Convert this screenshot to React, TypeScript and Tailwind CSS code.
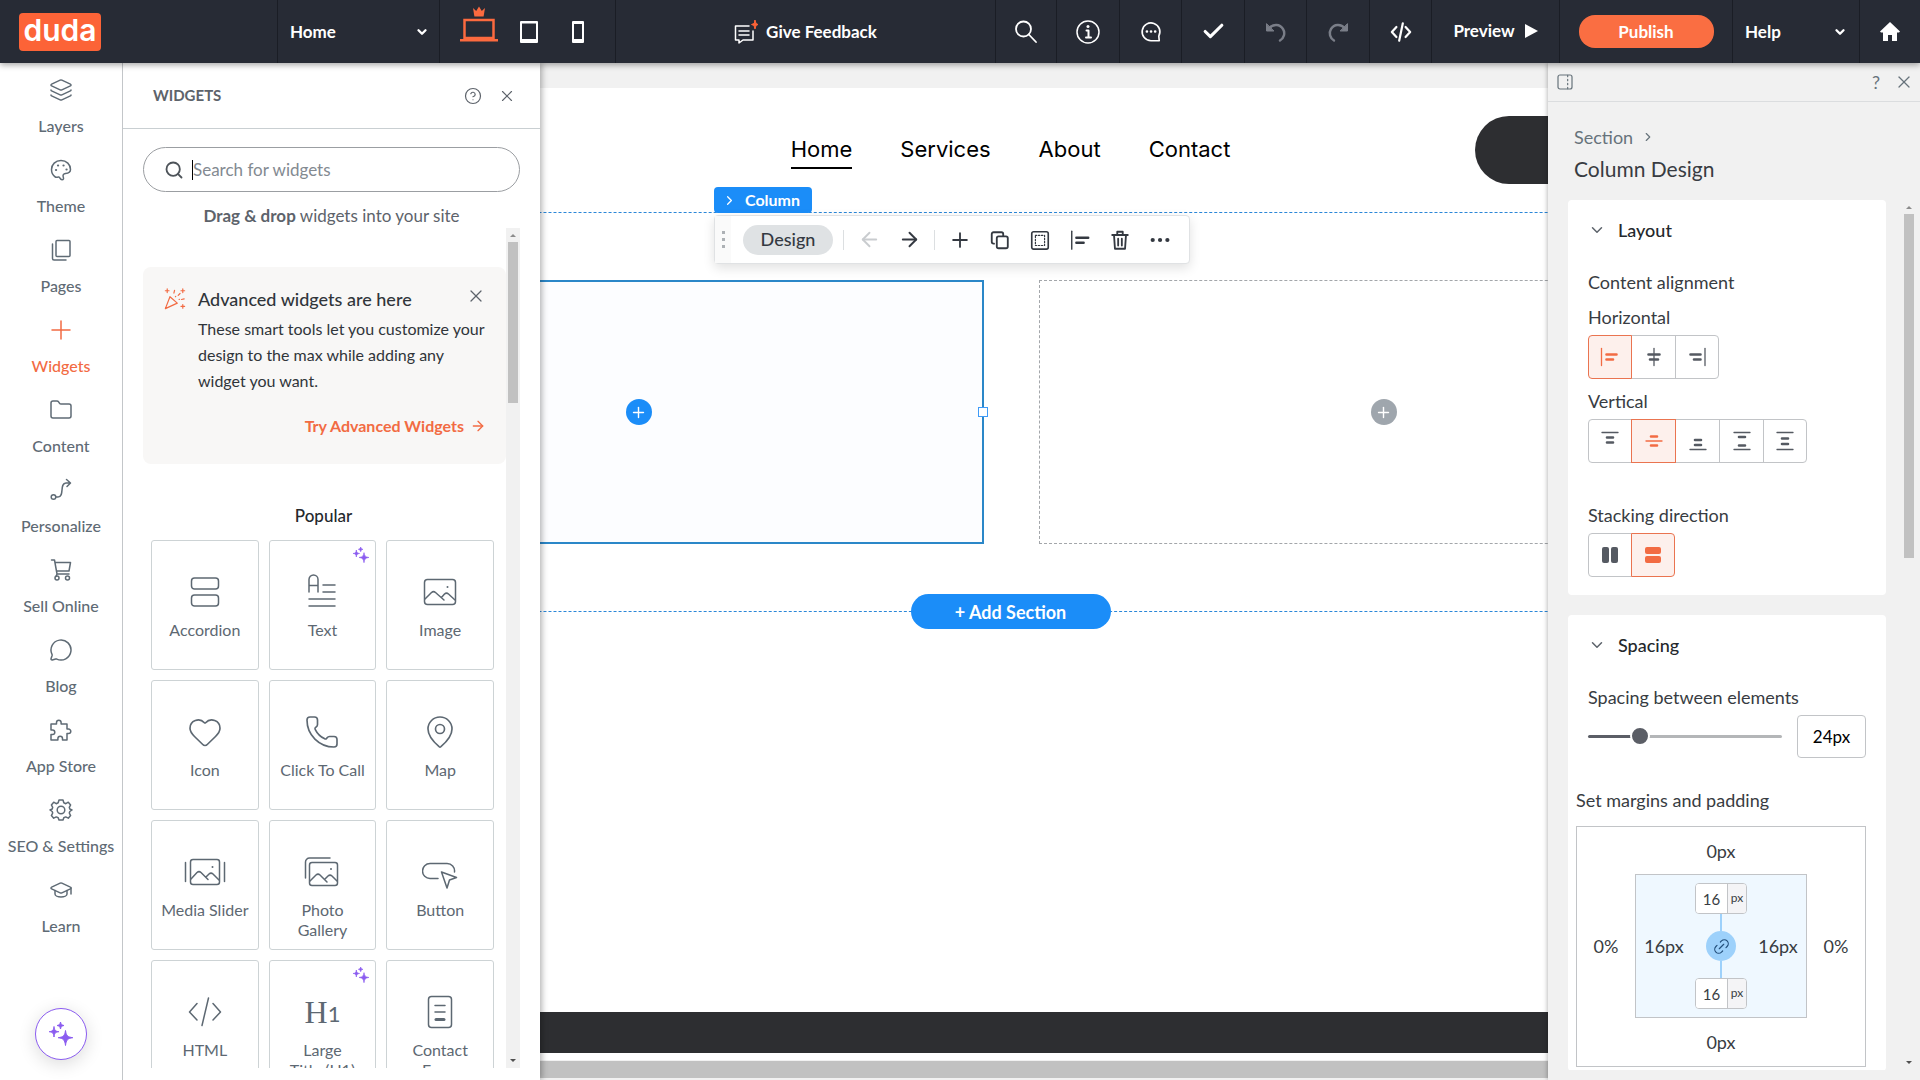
import type { ReactNode } from "react";
import {
  ArrowLeft, ArrowRight, Check, ChevronDown, ChevronRight, CircleHelp,
  Folder, GraduationCap, Heart, Layers, Link2, MapPin, MessageCircle, Phone, Plus, Search, X,
} from "lucide-react";

type IconProps = { children: ReactNode; className?: string; box?: string; width?: number };

function Svg({ children, className = "size-6", box = "0 0 24 24", width = 1.5 }: IconProps) {
  return (
    <svg
      viewBox={box}
      className={className}
      fill="none"
      stroke="currentColor"
      strokeWidth={width}
      strokeLinecap="round"
      strokeLinejoin="round"
      aria-hidden="true"
    >
      {children}
    </svg>
  );
}

function Sparkles({ className }: { className: string }) {
  return (
    <svg viewBox="0 0 24 24" className={className} fill="#8b5cf0" aria-hidden="true">
      <path d="M16.5 8.5C17.2 13.500 18.500 15 23.800 15.700C18.500 16.400 17.200 18 16.500 23.500C15.800 18 14.500 16.400 9.200 15.700C14.500 15 15.800 13.500 16.500 8.500Z" stroke="#8b5cf0" />
      <path d="M5 4.500C5.500 8.300 6.200 9.200 9.800 9.700C6.200 10.200 5.500 11.100 5 15C4.500 11.100 3.800 10.200.2 9.700C3.800 9.200 4.500 8.300 5 4.500Z" stroke="#8b5cf0" />
      <path d="M11.500 0C11.900 2.200 12.700 3 14.900 3.500C12.700 4 11.900 4.800 11.500 7C11.100 4.800 10.300 4 8.100 3.500C10.300 3 11.100 2.200 11.500 0Z" stroke="#8b5cf0" />
    </svg>
  );
}

const paletteIcon = (
  <Svg>
    <path d="M12 2.500C6.500 2.500 2.500 6.500 2.500 11.500c0 3.500 1.500 6 3.800 7.500 1.200.8 2.200-.2 3.500 0 1.400.2 1 2.700 3.200 2.700 1.600 0 1.800-1.200 1.300-2.400-.8-2 .2-3.600 2.200-3.800 2.700-.2 5-.8 5-4C21.500 6.500 17.500 2.500 12 2.500z" />
    <path d="M7 12h.1M9 7.500h.1M14.500 7.500h.1M17.500 11.500h.1" strokeWidth="2.200" />
  </Svg>
);

const pagesIcon = (
  <Svg>
    <rect x="7" y="2.500" width="14" height="16" rx="1" />
    <path d="M3.500 6v14.500a1.500 1.500 0 0 0 1.500 1.500H17" />
  </Svg>
);

const personalizeIcon = (
  <Svg>
    <circle cx="4.500" cy="19" r="2.300" />
    <path d="M7 19h2c7 0 1-14 8-14h4M17.500 1.500 21.500 5l-3.500 3.500" />
  </Svg>
);

const cartIcon = (
  <Svg>
    <path d="M2.500 2h3l2.500 14h12M6.200 4.500h15.300l-1.500 8.500H7.500M8 16l-1 2.500" />
    <circle cx="8" cy="20" r="2" />
    <circle cx="18.500" cy="20" r="2" />
  </Svg>
);

const puzzleIcon = (
  <Svg>
    <path d="M2 6h5.500V4.500a2.300 2.300 0 0 1 4.600 0V6H18v5h1.500a2.300 2.300 0 0 1 0 4.600H18V22h-4.500v-1.500a2.300 2.300 0 0 0-4.600 0V22H2v-5.500h1.500a2.300 2.300 0 0 0 0-4.600H2z" />
  </Svg>
);

const gearIcon = (
  <Svg>
    <circle cx="12" cy="12" r="3.800" />
    <path d="M10 2h4l.8 2.800 2 .9 2.500-1.500 2.300 2.700-1.300 2.500.5 1.600L23 12l-2.200 1.500-.5 1.500 1.300 2.600-2.300 2.600-2.600-1.300-1.900.8L14 22h-4l-.8-2.300-1.900-.8-2.600 1.300-2.300-2.600L3.700 15l-.5-1.500L1 12l2.200-1 .5-1.600-1.300-2.500 2.300-2.700 2.500 1.500 2-.9z" />
  </Svg>
);

const sideItems = [
  { label: "Layers", icon: <Layers size={24} strokeWidth={1.5} /> },
  { label: "Theme", icon: paletteIcon },
  { label: "Pages", icon: pagesIcon },
  { label: "Widgets", icon: <Svg><path d="M12 3v18M3 12h18" /></Svg>, active: true },
  { label: "Content", icon: <Folder size={24} strokeWidth={1.5} /> },
  { label: "Personalize", icon: personalizeIcon },
  { label: "Sell Online", icon: cartIcon },
  { label: "Blog", icon: <MessageCircle size={24} strokeWidth={1.5} /> },
  { label: "App Store", icon: puzzleIcon },
  { label: "SEO & Settings", icon: gearIcon },
  { label: "Learn", icon: <GraduationCap size={24} strokeWidth={1.5} /> },
];

const widgets = [
  {
    label: "Accordion",
    icon: (
      <Svg box="0 0 36 36" className="size-9">
        <rect x="4.500" y="4" width="27" height="11" rx="3" />
        <rect x="4.500" y="21" width="27" height="11" rx="3" />
      </Svg>
    ),
  },
  {
    label: "Text",
    ai: true,
    icon: (
      <Svg box="0 0 36 36" className="size-9">
        <path d="M5 18V5.500a4.500 4.500 0 0 1 9 0V18M5 11.500h9M19 11h12M19 18h12M5 25h26M5 32h26" />
      </Svg>
    ),
  },
  {
    label: "Image",
    icon: (
      <Svg box="0 0 36 36" className="size-9">
        <rect x="2.500" y="5.500" width="31" height="25" rx="3" />
        <path d="M3 25l6.500-6.500a3 3 0 0 1 4 0L22 26M19.500 23.500l3-3.500a3 3 0 0 1 4 0L33 26" />
        <circle cx="25.500" cy="13" r="1" fill="currentColor" stroke="none" />
      </Svg>
    ),
  },
  { label: "Icon", icon: <Heart size={36} strokeWidth={1.1} /> },
  { label: "Click To Call", icon: <Phone size={36} strokeWidth={1.1} /> },
  { label: "Map", icon: <MapPin size={36} strokeWidth={1.1} /> },
  {
    label: "Media Slider",
    icon: (
      <Svg box="0 0 42 36" className="h-9 w-[42px]">
        <rect x="6.500" y="5.500" width="29" height="25" rx="2.500" />
        <path d="M7 25l6-6.500a3 3 0 0 1 4 0l7 7M22 23l3-3a3 3 0 0 1 4 0l6 6M1.500 8.500v19M40.500 8.500v19" />
        <circle cx="28.500" cy="13" r="1" fill="currentColor" stroke="none" />
      </Svg>
    ),
  },
  {
    label: "Photo Gallery",
    wrap: true,
    icon: (
      <Svg box="0 0 36 36" className="size-9">
        <rect x="5.500" y="8.500" width="28" height="23" rx="2.500" />
        <path d="M6 27l6-6a3 3 0 0 1 4 0l7 7M21 25l3-3a3 3 0 0 1 4 0l5 5M1.500 24V8a4 4 0 0 1 4-4H26" />
        <circle cx="27" cy="15" r="1" fill="currentColor" stroke="none" />
      </Svg>
    ),
  },
  {
    label: "Button",
    icon: (
      <Svg box="0 0 36 36" className="size-9">
        <path d="M16 24.500H8a7.500 7.500 0 0 1 0-15h17a7.500 7.500 0 0 1 7.500 8.500" />
        <path d="M19.500 18l15 5.500-7 2.500-2.500 8z" />
      </Svg>
    ),
  },
  {
    label: "HTML",
    icon: (
      <Svg box="0 0 36 36" className="size-9">
        <path d="M10 9.500 2.500 18l7.500 8M26 9.500l7.500 8.500-7.500 8M21.500 4l-6.500 27.500" />
      </Svg>
    ),
  },
  {
    label: "Large Title (H1)",
    ai: true,
    wrap: true,
    icon: (
      <span className="flex h-9 items-center font-[Liberation_Serif] text-[32px] leading-9">
        H<span className="pt-1 font-[Lato] text-[22px]">1</span>
      </span>
    ),
  },
  {
    label: "Contact Form",
    wrap: true,
    icon: (
      <Svg box="0 0 36 36" className="size-9">
        <rect x="6.500" y="2.500" width="23" height="31" rx="3" />
        <path d="M13 11.500h10M13 18h10" />
        <path d="M14 25.500h8" strokeWidth="3" />
      </Svg>
    ),
  },
];

const cell = "flex h-full shrink-0 items-center justify-center border-l border-[#1a1d25]";

function TopBar() {
  return (
    <header className="relative z-30 flex h-[63px] shrink-0 items-center bg-[#272b35] text-[17px] font-bold text-white shadow-[0_2px_6px_rgba(0,0,0,0.35)]">
      <div className="w-[277px] shrink-0 pl-[19px]">
        <a href="#home" className="flex h-[38px] w-[82px] items-center justify-center rounded-[4px] bg-[#fc6337] pb-1 font-[Inter] text-[30px] leading-8 font-semibold">
          duda
        </a>
      </div>
      <label className={`${cell} relative w-[162px]`}>
        <select aria-label="Page" className="h-full w-full appearance-none bg-transparent pl-3 outline-none">
          <option>Home</option>
        </select>
        <ChevronDown size={14} strokeWidth={4} className="pointer-events-none absolute right-2.5" />
      </label>
      <div className={`${cell} w-44 gap-[22px] pr-3`}>
        <button aria-label="Desktop" className="text-[#fc6a3f]">
          <svg viewBox="0 0 38 36" className="mb-4 h-9 w-[38px]" aria-hidden="true">
            <path d="M13 2l3.200 3L19 .5l2.800 4.500L25 2l-1.400 8.500h-9.200z" fill="currentColor" />
            <path d="M4.500 14h29v18h-29z" fill="none" stroke="currentColor" strokeWidth="2.500" />
            <path d="M0 33h38v2.500H0z" fill="currentColor" />
          </svg>
        </button>
        <button aria-label="Tablet">
          <svg viewBox="0 0 18 22" className="h-[22px] w-[18px]" aria-hidden="true">
            <path fillRule="evenodd" d="M1 0h16a1 1 0 0 1 1 1v20a1 1 0 0 1-1 1H1a1 1 0 0 1-1-1V1a1 1 0 0 1 1-1zM2 2.500v15.500h14v-15.500z" fill="currentColor" />
          </svg>
        </button>
        <button aria-label="Phone" className="pl-3">
          <svg viewBox="0 0 12 22" className="h-[22px] w-3" aria-hidden="true">
            <path fillRule="evenodd" d="M1 0h10a1 1 0 0 1 1 1v20a1 1 0 0 1-1 1H1a1 1 0 0 1-1-1V1a1 1 0 0 1 1-1zM2 3v15h8V3z" fill="currentColor" />
          </svg>
        </button>
      </div>
      <div className={`${cell} min-w-0 flex-1`}>
        <button className="flex items-center gap-2">
          <Svg className="size-6">
            <path d="M15 6H1.500v14H5v3l4-3h10V11M5 11h10M5 15h10" />
            <path d="M21 0l1 3.500 2 1-2 1-1 3.500L20 5.500l-2.500-1L20 3.500z" fill="#fc6337" stroke="#fc6337" strokeWidth="1" />
          </Svg>
          Give Feedback
        </button>
      </div>
      <button aria-label="Search" className={`${cell} w-[61px]`}>
        <Svg className="size-6" width={1.8}>
          <circle cx="9.500" cy="9" r="7.500" />
          <path d="M14.800 14.500 22 22" />
        </Svg>
      </button>
      <button aria-label="Information" className={`${cell} w-[63px]`}>
        <Svg className="size-6">
          <circle cx="12" cy="12" r="11" />
          <path d="M10.500 10.500H12.500V17.500M10 17.500h5" strokeWidth="2" />
          <circle cx="12" cy="6.500" r="1.500" fill="currentColor" stroke="none" />
        </Svg>
      </button>
      <button aria-label="Comments" className={`${cell} w-[62px]`}>
        <Svg className="size-[22px]" width={1.8}>
          <path d="M20.500 16.500A9.700 9.700 0 1 0 12 21.500h9z" />
          <path d="M7.500 11.500h.1M12 11.500h.1M16.500 11.500h.1" strokeWidth="2.800" />
        </Svg>
      </button>
      <button aria-label="Mark as done" className={`${cell} w-[63px]`}>
        <Check size={25} strokeWidth={3} />
      </button>
      <button aria-label="Undo" className={`${cell} w-[62px] text-[#7a7e88]`}>
        <Svg className="size-6" width={2.4}>
          <path d="M16 20.500C20 18 21.500 13 19 9C16 4 9 3.500 5 8.500" />
          <path d="M2.500 4v7h7z" fill="currentColor" strokeWidth="1" />
        </Svg>
      </button>
      <button aria-label="Redo" className={`${cell} w-[63px] text-[#7a7e88]`}>
        <Svg className="size-6" width={2.400}>
          <path d="M8 20.500C4 18 2.500 13 5 9C8 4 15 3.500 19 8.500" />
          <path d="M21.500 4v7h-7z" fill="currentColor" strokeWidth="1" />
        </Svg>
      </button>
      <button aria-label="Developer mode" className={`${cell} w-[62px]`}>
        <Svg className="size-[22px]" width={2.4}>
          <path d="M7 6.500 2 12l5 5.500M17 6.500l5 5.500-5 5.500M14 2.500l-4 19" />
        </Svg>
      </button>
      <button className={`${cell} w-32 gap-2.5 pb-px`}>
        Preview
        <svg viewBox="0 0 13 14" className="h-3.5 w-[13px]" fill="currentColor" aria-hidden="true">
          <path d="M0 0l13 7-13 7z" />
        </svg>
      </button>
      <div className={`${cell} w-[173px]`}>
        <button className="h-[33px] w-[135px] rounded-2xl bg-[#fa6e42]">Publish</button>
      </div>
      <label className={`${cell} relative w-[127px]`}>
        <select aria-label="Help" className="h-full w-full appearance-none bg-transparent pl-3 outline-none">
          <option>Help</option>
        </select>
        <ChevronDown size={14} strokeWidth={4} className="pointer-events-none absolute right-3" />
      </label>
      <a href="#dashboard" aria-label="Dashboard" className={`${cell} w-[61px]`}>
        <svg viewBox="0 0 20 19" className="h-[19px] w-5" fill="currentColor" aria-hidden="true">
          <path d="M10 0l10 9.500-1 1h-2V19h-5v-6H8v6H3v-8.500H1l-1-1z" />
        </svg>
      </a>
    </header>
  );
}

function SideNav() {
  return (
    <nav className="z-20 flex w-[123px] shrink-0 flex-col border-r border-[#c3c6c9] bg-white pt-[5px]">
      {sideItems.map((item) => (
        <button
          key={item.label}
          className={`flex h-20 flex-col items-center justify-center gap-3 text-base leading-6 font-medium whitespace-nowrap ${item.active ? "text-[#f26b43]" : "text-[#5f6b75]"}`}
        >
          {item.icon}
          {item.label}
        </button>
      ))}
      <button
        aria-label="AI assistant"
        className="mt-auto mb-5 flex size-[52px] items-center justify-center self-center rounded-full border border-[#8b5cf0] bg-white shadow-[0_4px_18px_rgba(0,0,0,0.14)]"
      >
        <Sparkles className="size-6" />
      </button>
    </nav>
  );
}

function ScrollBar({ thumb, track }: { thumb: string; track: string }) {
  return (
    <div className={`flex w-3.5 shrink-0 flex-col items-center ${track}`} aria-hidden="true">
      <svg viewBox="0 0 14 14" className="size-3.5" fill="#8b8b8b"><path d="M4 9h6L7 6z" /></svg>
      <div className={`w-2.5 bg-[#c1c1c1] ${thumb}`} />
      <svg viewBox="0 0 14 14" className="mt-auto size-3.5" fill="#505050"><path d="M4 5h6L7 8z" /></svg>
    </div>
  );
}

function WidgetsPanel() {
  return (
    <aside className="z-10 col-start-1 row-start-1 flex min-h-0 w-[417px] flex-col justify-self-start bg-white pb-3 shadow-[2px_0_6px_rgba(0,0,0,0.3)]">
      <div className="flex h-[66px] shrink-0 items-center gap-4 border-b border-[#c9cfd2] pr-6 pl-[30px] text-[#5d636b]">
        <h2 className="flex-1 text-[15px] font-bold">WIDGETS</h2>
        <button aria-label="Help"><CircleHelp size={18} strokeWidth={1.6} /></button>
        <button aria-label="Close"><X size={18} strokeWidth={1.5} /></button>
      </div>
      <label className="mx-5 mt-[18px] flex h-[45px] shrink-0 items-center gap-2 rounded-full border border-[#9b9ea2] pl-5 text-[#4d5359]">
        <Search size={20} strokeWidth={2.2} />
        <span className="h-5 border-l border-black" />
        <input aria-label="Search for widgets" placeholder="Search for widgets" className="-ml-2 min-w-0 flex-1 bg-transparent text-[17px] outline-none placeholder:text-[#838a91]" />
      </label>
      <p className="mt-3 shrink-0 text-center text-[17px] leading-6 text-[#5d636b]">
        <b>Drag &amp; drop</b> widgets into your site
      </p>
      <div className="mr-5 ml-5 flex min-h-0 flex-1 overflow-hidden">
        <div className="min-w-0 flex-1 pt-[39px]">
          <section className="h-[197px] rounded-lg bg-[#f8f7f6] pt-[19px] pr-5 pl-[21px] text-[#30353a]">
            <div className="flex gap-3">
              <Svg className="mt-0.5 size-[22px] shrink-0 text-[#f26b43]" width={1.3}>
                <path d="M6.500 9.500 1.500 22.500l13-6zM3.500 1v4M1.500 3h4M20.500 1v4M18.500 3h4M20.500 18v4M18.500 20h4M11.500 2.500l-.7 3M15.500 8l2-2M19 12.500l3-.7M12.500 9.500l.3-.3M16.500 12.500l.3-.2" />
              </Svg>
              <div className="flex-1">
                <h3 className="text-lg leading-[26px] font-medium">Advanced widgets are here</h3>
                <p className="pt-1 text-base leading-[26px]">
                  These smart tools let you customize your<br />design to the max while adding any<br />widget you want.
                </p>
              </div>
              <button aria-label="Dismiss" className="-ml-8 self-start text-[#5d636b]"><X size={20} strokeWidth={1.5} /></button>
            </div>
            <button className="mt-5 ml-auto flex items-center gap-1.5 text-base font-bold text-[#f26b43]">
              Try Advanced Widgets <ArrowRight size={16} />
            </button>
          </section>
          <h3 className="mt-10 mb-3 pr-0.5 text-center text-[17px] leading-6 font-medium text-[#24282c]">Popular</h3>
          <div className="mr-3 ml-2 grid grid-cols-3 gap-2.5">
            {widgets.map((w) => (
              <button
                key={w.label}
                className="relative flex h-[130px] flex-col items-center rounded-[3px] border border-[#cdd3d5] pt-[33px] text-base leading-5 text-[#5d6872]"
              >
                {w.icon}
                <span className={`mt-2.5 ${w.wrap ? "w-[70px]" : "whitespace-nowrap"}`}>{w.label}</span>
                {w.ai && <Sparkles className="absolute top-1.5 right-1.5 size-4" />}
              </button>
            ))}
          </div>
        </div>
        <ScrollBar thumb="h-[161px]" track="bg-[#f1f1f1]" />
      </div>
    </aside>
  );
}

const tools = [
  { label: "Add", icon: <Svg className="size-[22px]" width={2}><path d="M12 4.500v15M4.500 12h15" /></Svg> },
  {
    label: "Duplicate",
    icon: (
      <Svg className="size-[22px]" width={2}>
        <rect x="8.500" y="8" width="12" height="13" rx="2" />
        <path d="M5.500 16H5a2 2 0 0 1-2-2V5.500a2 2 0 0 1 2-2h8.500a2 2 0 0 1 2 2v2" />
      </Svg>
    ),
  },
  {
    label: "Column size",
    icon: (
      <Svg className="size-[22px]" width={1.800}>
        <rect x="3" y="3" width="18" height="19" rx="2" />
        <rect x="7" y="7" width="10" height="11" strokeWidth="1.300" strokeDasharray="1.500 1.800" />
      </Svg>
    ),
  },
  {
    label: "Align",
    icon: (
      <Svg className="size-[22px]" width={1.500}>
        <path d="M3 2.500v19.500" />
        <path d="M8 9.500h13M8 15h8" strokeWidth="2.600" />
      </Svg>
    ),
  },
  {
    label: "Delete",
    icon: (
      <Svg className="size-[22px]" width={2}>
        <path d="M3.500 6.500h17M5.500 7l1 14.500h11l1-14.500M9 6V3h6v3M10 10.500v7.500M14 10.500v7.500" />
      </Svg>
    ),
  },
  { label: "More", icon: <Svg className="size-[22px]" width={4.500}><path d="M4 12h.1M12 12h.1M20 12h.1" /></Svg> },
];

function ColumnToolbar() {
  return (
    <div className="absolute -top-[95px] left-[419px] z-[1] flex w-[476px] flex-col items-start">
      <div className="flex h-[26px] items-center gap-2 rounded-[4px] bg-[#1b8df8] pr-3 pl-2 text-base font-bold text-white">
        <ChevronRight size={15} />
        Column
      </div>
      <div className="mt-0.5 flex h-[49px] w-full items-center rounded border border-[#e0e2e4] bg-white text-[#343941] shadow-[0_4px_12px_rgba(0,0,0,0.12)]">
        <span className="flex h-full w-4 flex-col items-center justify-center gap-1 bg-[#fafafa]">
          <i className="size-[3px] bg-[#adb1b5]" />
          <i className="size-[3px] bg-[#adb1b5]" />
          <i className="size-[3px] bg-[#adb1b5]" />
        </span>
        <button className="mr-2.5 ml-3 h-[30px] w-[90px] rounded-full bg-[#dfe2e4] pb-0.5 text-lg font-medium">Design</button>
        <div className="flex h-5 items-center border-x border-[#dcdfe1] px-[5px]">
          <button aria-label="Move left" className="flex w-10 justify-center text-[#c9cccf]"><ArrowLeft size={23} /></button>
          <button aria-label="Move right" className="flex w-10 justify-center"><ArrowRight size={23} /></button>
        </div>
        <div className="flex pl-[5px]">
          {tools.map((tool) => (
            <button key={tool.label} aria-label={tool.label} className="flex w-10 justify-center">{tool.icon}</button>
          ))}
        </div>
      </div>
    </div>
  );
}

function Canvas() {
  return (
    <main className="col-start-1 row-start-1 flex min-w-0 flex-col bg-white">
      <div className="h-[25px] shrink-0 bg-[#f1f1f1]" />
      <div className="flex min-h-0 flex-1 flex-col pr-[22px]">
        <div className="grid h-[124px] shrink-0 grid-cols-[1fr_auto_1fr] items-center px-[170px]">
          <span />
          <nav className="flex gap-12 font-[Inter] text-[22px] leading-7 text-black">
            <a href="#home" className="border-b-2 border-black py-1">Home</a>
            <a href="#services" className="py-1">Services</a>
            <a href="#about" className="py-1">About</a>
            <a href="#contact" className="py-1">Contact</a>
          </nav>
          <span className="h-[68px] w-[253px] justify-self-end rounded-full bg-[#2d2e31]" />
        </div>
        <section className="relative flex shrink-0 gap-[55px] border-y border-dashed border-[#2b87d8] px-[170px] py-[67px]">
          <div className="relative flex h-[264px] flex-1 items-center justify-center border-2 border-[#2b87c8] bg-[#fcfdff]">
            <ColumnToolbar />
            <button aria-label="Add to column" className="flex size-[26px] items-center justify-center rounded-full bg-[#1b8df8] text-white"><Plus size={17} /></button>
            <i className="absolute -right-1.5 size-2.5 border border-[#3f9bf8] bg-white" />
          </div>
          <div className="flex h-[264px] flex-1 items-center justify-center border border-dashed border-[#a3a6aa]">
            <button aria-label="Add to column" className="flex size-[26px] items-center justify-center rounded-full bg-[#9fa6ad] text-white"><Plus size={17} /></button>
          </div>
          <button className="absolute -bottom-[18px] left-1/2 h-[35px] w-[200px] -translate-x-1/2 rounded-full bg-[#1b8df8] text-lg font-bold text-white">
            + Add Section
          </button>
        </section>
      </div>
      <footer className="h-[41px] shrink-0 bg-[#2d2e31]" />
      <div className="h-[27px] shrink-0 border-t-[7px] border-white bg-[#f1f1f1] pt-px">
        <div className="mr-[22px] h-[17px] bg-[#c1c1c1]" />
      </div>
    </main>
  );
}

function Segmented({ name, icons, active }: { name: string; icons: ReactNode[]; active: number }) {
  return (
    <div role="group" aria-label={name} className="flex text-[#555a62]">
      {icons.map((icon, i) => (
        <button
          key={i}
          aria-label={`${name} ${i + 1}`}
          aria-pressed={i === active}
          className={`-mr-px flex h-11 w-[45px] items-center justify-center border first:w-11 first:rounded-l-[4px] last:w-11 last:rounded-r-[4px] ${i === active ? "z-[1] border-[#ea7450] bg-[#fdf0ec] text-[#f26b43]" : "border-[#c2c4c7]"}`}
        >
          {icon}
        </button>
      ))}
    </div>
  );
}

// thin guide lines with thick rounded bars
function Bars({ lines, bars }: { lines: string; bars: string }) {
  return (
    <Svg className="size-[22px]" box="0 0 22 22" width={1.3}>
      <path d={lines} />
      <path d={bars} strokeWidth="2.600" />
    </Svg>
  );
}

const horizontal = [
  <Bars lines="M2.500 2.500v17" bars="M7.500 8.500h10M7.500 13.500h6.500" />,
  <Bars lines="M11 2.500v17" bars="M5.500 8.500h11M7 13.500h8" />,
  <Bars lines="M19 2.500v17" bars="M4.500 8.500h10M8 13.500h6.500" />,
];

const vertical = [
  <Bars lines="M3 2.500h16" bars="M8 7.500h6M8 12.500h6" />,
  <Bars lines="M3 11h16" bars="M8 6.500h6M8 15.500h6" />,
  <Bars lines="M3 19.500h16" bars="M8 10h6M8 15h6" />,
  <Bars lines="M3 2.500h16M3 19.500h16" bars="M8 7h6M8 15.500h6" />,
  <Bars lines="M3 2.500h16M3 19.500h16" bars="M8 8.500h6M8 14h6" />,
];

const stacking = [
  <svg viewBox="0 0 16 16" className="size-4" fill="currentColor"><rect width="7" height="16" rx="2" /><rect x="9" width="7" height="16" rx="2" /></svg>,
  <svg viewBox="0 0 16 16" className="size-4" fill="currentColor"><rect width="16" height="7" rx="2" /><rect y="9" width="16" height="7" rx="2" /></svg>,
];

function PaddingInput({ side }: { side: string }) {
  return (
    <label className="flex h-[31px] w-[52px] shrink-0 overflow-hidden rounded-[4px] border border-[#c2c4c7] bg-white leading-7">
      <input aria-label={`Padding ${side}`} defaultValue="16" className="w-[31px] bg-white text-center text-[15px] outline-none" />
      <span className="flex-1 border-l border-[#c2c4c7] bg-[#f4f4f6] text-center text-xs leading-7">px</span>
    </label>
  );
}

function SectionTitle({ children }: { children: ReactNode }) {
  return (
    <h3>
      <button className="flex items-center gap-3 text-lg leading-6 font-medium text-[#24282c]">
        <ChevronDown size={18} strokeWidth={2} className="text-[#5d636b]" />
        {children}
      </button>
    </h3>
  );
}

function DesignPanel() {
  return (
    <aside className="z-10 col-start-1 row-start-1 flex min-h-0 w-[372px] flex-col justify-self-end bg-[#f1f1f1] text-[#383c42] shadow-[-1px_0_4px_rgba(0,0,0,0.25)]">
      <div className="flex h-[39px] shrink-0 items-center gap-3.5 border-b border-[#dbdddf] pr-1.5 pl-[9px] text-[#67737b]">
        <button aria-label="Dock panel" className="mr-auto">
          <Svg className="size-4" width={1.8}>
            <rect x="1.500" y="1.500" width="21" height="21" rx="3" />
            <path d="M16 2v20" strokeDasharray="2 4" />
          </Svg>
        </button>
        <button aria-label="Help" className="text-lg">?</button>
        <button aria-label="Close"><X size={20} strokeWidth={1.5} /></button>
      </div>
      <div className="shrink-0 pt-[23px] pl-[26px]">
        <a href="#section" className="flex items-center gap-2 text-lg leading-6 text-[#67737b]">
          Section <ChevronRight size={14} />
        </a>
        <h2 className="pt-1 text-[21px] leading-8">Column Design</h2>
      </div>
      <div className="mt-[15px] mb-2.5 flex min-h-0 flex-1 gap-3 pl-5">
        <div className="flex min-h-0 flex-1 flex-col gap-5 overflow-hidden text-lg leading-6">
          <section className="h-[395px] w-[318px] shrink-0 rounded-[4px] bg-white px-5 pt-[18px]">
            <SectionTitle>Layout</SectionTitle>
            <p className="mt-7">Content alignment</p>
            <p className="mt-[11px] mb-1.5">Horizontal</p>
            <Segmented name="Horizontal" icons={horizontal} active={0} />
            <p className="mt-2.5 mb-1.5">Vertical</p>
            <Segmented name="Vertical" icons={vertical} active={1} />
            <p className="mt-10 mb-1.5">Stacking direction</p>
            <Segmented name="Stacking" icons={stacking} active={1} />
          </section>
          <section className="w-[318px] shrink-0 rounded-[4px] bg-white px-5 pt-[18px] pb-1">
            <SectionTitle>Spacing</SectionTitle>
            <label htmlFor="gap" className="mt-7 block">Spacing between elements</label>
            <div className="mt-1.5 flex items-center gap-[15px]">
              <input
                id="gap"
                type="range"
                defaultValue={24}
                className="h-5 w-[194px] appearance-none bg-transparent [&::-webkit-slider-runnable-track]:h-[3px] [&::-webkit-slider-runnable-track]:rounded-full [&::-webkit-slider-runnable-track]:bg-[linear-gradient(to_right,#5b5e66_26%,#b4b6b8_26%)] [&::-webkit-slider-thumb]:-mt-[9px] [&::-webkit-slider-thumb]:size-5 [&::-webkit-slider-thumb]:appearance-none [&::-webkit-slider-thumb]:rounded-full [&::-webkit-slider-thumb]:border-2 [&::-webkit-slider-thumb]:border-white [&::-webkit-slider-thumb]:bg-[#5b5e66]"
              />
              <input aria-label="Spacing value" defaultValue="24px" className="h-[43px] w-[69px] rounded-[4px] border border-[#c2c4c7] text-center text-[17px] text-black outline-none" />
            </div>
            <p className="mt-[30px] -ml-3">Set margins and padding</p>
            <div className="mt-3.5 -ml-3 grid h-[241px] w-[290px] grid-cols-[58px_1fr_58px] grid-rows-[47px_1fr_48px] border border-[#c2c4c7]">
              <button aria-label="Margin top" className="col-start-2">0px</button>
              <button aria-label="Margin left" className="col-start-1 row-start-2">0%</button>
              <div className="col-start-2 row-start-2 grid grid-cols-[56px_1fr_56px] items-center border border-[#c2c4c7] bg-[#eff8ff]">
                <button aria-label="Padding left">16px</button>
                <div className="flex h-full flex-col items-center py-2">
                  <PaddingInput side="top" />
                  <i className="w-0.5 flex-1 bg-[#9dd1fb]" />
                  <button aria-label="Link values" className="flex size-[30px] shrink-0 items-center justify-center rounded-full bg-[#9dd1fb] text-[#24507c]">
                    <Link2 size={19} strokeWidth={1.5} className="-rotate-45" />
                  </button>
                  <i className="w-0.5 flex-1 bg-[#9dd1fb]" />
                  <PaddingInput side="bottom" />
                </div>
                <button aria-label="Padding right">16px</button>
              </div>
              <button aria-label="Margin right" className="col-start-3 row-start-2">0%</button>
              <button aria-label="Margin bottom" className="col-start-2 row-start-3">0px</button>
            </div>
          </section>
        </div>
        <div className="mr-1 flex">
          <ScrollBar thumb="h-[344px]" track="" />
        </div>
      </div>
    </aside>
  );
}

export default function App() {
  return (
    <div className="flex h-screen flex-col overflow-hidden bg-white font-[Lato,sans-serif]">
      <TopBar />
      <div className="flex min-h-0 flex-1">
        <SideNav />
        <div className="grid min-w-0 flex-1 grid-cols-[minmax(0,1fr)] grid-rows-[minmax(0,1fr)]">
          <Canvas />
          <WidgetsPanel />
          <DesignPanel />
        </div>
      </div>
    </div>
  );
}
